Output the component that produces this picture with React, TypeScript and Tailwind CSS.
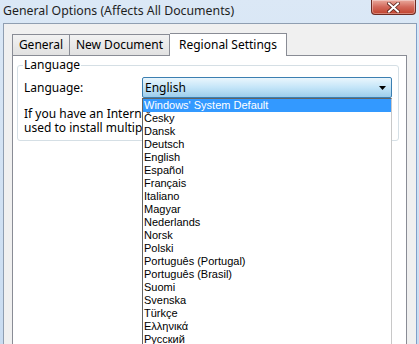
import React from 'react';

const languages = [
    "Windows' System Default",
    'Česky',
    'Dansk',
    'Deutsch',
    'English',
    'Español',
    'Français',
    'Italiano',
    'Magyar',
    'Nederlands',
    'Norsk',
    'Polski',
    'Português (Portugal)',
    'Português (Brasil)',
    'Suomi',
    'Svenska',
    'Türkçe',
    'Ελληνικά',
    'Русский',
];

const CloseButton: React.FC = () => {
    return (
        <div className="absolute top-0 right-[3px] w-[45px] h-[15px] rounded-b-[4px] border border-t-0 border-[#6d2b22] bg-gradient-to-b from-[#e9a99d] via-[#d2685a] to-[#c0412c] flex items-center justify-center shadow-[inset_0_0_0_1px_rgba(255,255,255,0.35)]">
            <svg width="13" height="11" viewBox="0 0 13 11">
                <path d="M2 1.5 L11 9.5 M11 1.5 L2 9.5" stroke="#5a2119" strokeWidth="3.6" strokeLinecap="square" />
                <path d="M2 1.5 L11 9.5 M11 1.5 L2 9.5" stroke="#ffffff" strokeWidth="2" strokeLinecap="square" />
            </svg>
        </div>
    );
};

const App: React.FC = () => {
    return (
        <div className="w-[419px] h-[344px] overflow-hidden relative flex flex-col bg-gradient-to-b from-[#dbe8f6] to-[#c9dcf1] font-['Noto_Sans','Open_Sans',sans-serif] text-[12px] text-black">
            {/* title bar */}
            <div className="h-[23px] shrink-0 flex items-center pl-[3px] text-[12.3px] leading-none text-[#1e1e1e]">
                General Options (Affects All Documents)
            </div>
            <CloseButton />

            {/* client area */}
            <div className="ml-[3px] w-[414px] flex-1 flex flex-col bg-[#f0f0f0] border-t border-l border-r border-t-[#8f9eb1] border-l-[#8f9eb1] border-r-[#7f9fc9] pt-[9px] pl-[8px]">
                {/* tabs */}
                <div className="flex items-end h-[23px] -mb-[1px] relative z-10">
                    <div className="w-[58px] h-[21px] mb-[1px] border border-b-0 border-[#898c95] bg-gradient-to-b from-[#f2f2f2] to-[#e1e1e1] flex items-center justify-center">
                        General
                    </div>
                    <div className="w-[100px] h-[21px] mb-[1px] border border-b-0 border-l-0 border-[#898c95] bg-gradient-to-b from-[#f2f2f2] to-[#e1e1e1] flex items-center justify-center">
                        New Document
                    </div>
                    <div className="w-[117px] h-[23px] border border-b-0 border-l-0 border-[#898c95] bg-white flex items-center justify-center pb-[1px]">
                        Regional Settings
                    </div>
                </div>

                {/* tab page */}
                <div className="w-[395px] flex-1 border border-b-0 border-[#898c95] bg-white pl-[4px]">
                    <fieldset className="mt-[2px] w-[382px] border border-[#d5dfe5] rounded-[3px] pl-[6px] pb-[5px]">
                        <legend className="-ml-[1px] px-[1px] leading-[14px]">Language</legend>

                        <div className="flex items-center mt-[5px]">
                            <span className="w-[118px] leading-none">Language:</span>
                            <div className="relative">
                                <div className="w-[250px] h-[21px] border border-[#3c7fb1] rounded-[2px] bg-gradient-to-b from-[#eaf6fd] via-[#c4e5f8] to-[#9dcdec] flex items-center justify-between pl-[2px] pr-[5px]">
                                    <span className="leading-none">English</span>
                                    <svg width="7" height="4" viewBox="0 0 7 4">
                                        <path d="M0 0 H7 L3.5 4 Z" fill="#000" />
                                    </svg>
                                </div>

                                {/* open drop-down list */}
                                <ul className="absolute top-full left-0 w-[250px] border border-[#646464] border-r-[#c8c8c8] bg-white font-['Liberation_Sans','Arial',sans-serif] text-[11px]">
                                    {languages.map((lang, i) => (
                                        <li
                                            key={lang}
                                            className={
                                                i === 0
                                                    ? 'h-[13px] leading-[13px] pl-[1px] whitespace-nowrap bg-[#3399ff] text-white'
                                                    : 'h-[13px] leading-[13px] pl-[1px] whitespace-nowrap'
                                            }
                                        >
                                            {lang}
                                        </li>
                                    ))}
                                </ul>
                            </div>
                        </div>

                        <div className="mt-[9px] leading-[14px] whitespace-nowrap">
                            <div>If you have an International version,</div>
                            <div>used to install multiple languages.</div>
                        </div>
                    </fieldset>
                </div>
            </div>
        </div>
    );
};

export default App;
